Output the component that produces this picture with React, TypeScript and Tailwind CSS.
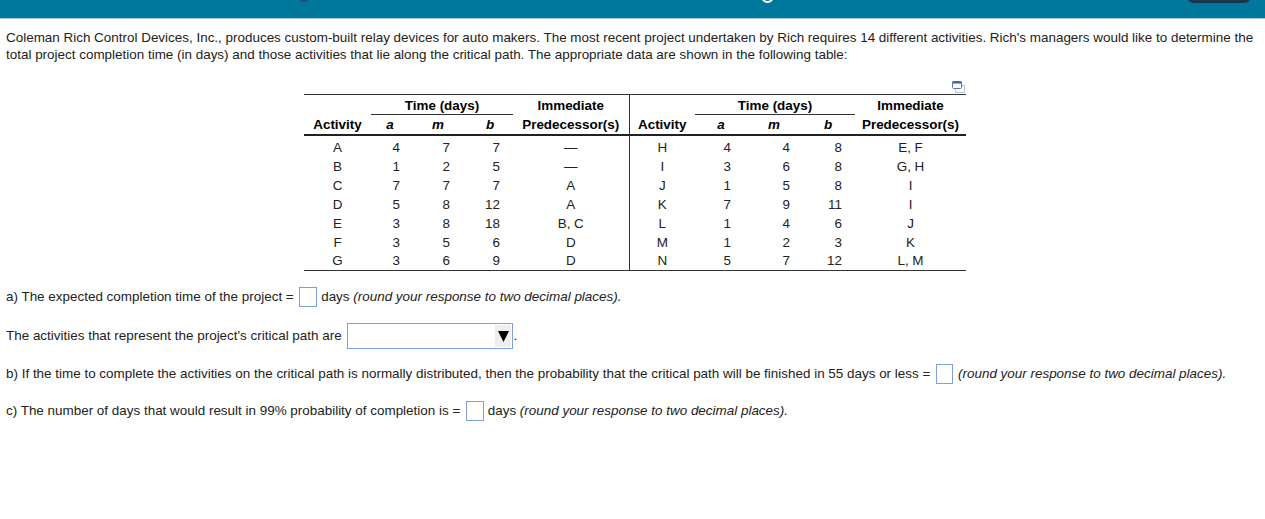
import React from 'react';

const left = [
  ['A', '4', '7', '7', '—'],
  ['B', '1', '2', '5', '—'],
  ['C', '7', '7', '7', 'A'],
  ['D', '5', '8', '12', 'A'],
  ['E', '3', '8', '18', 'B, C'],
  ['F', '3', '5', '6', 'D'],
  ['G', '3', '6', '9', 'D'],
];

const right = [
  ['H', '4', '4', '8', 'E, F'],
  ['I', '3', '6', '8', 'G, H'],
  ['J', '1', '5', '8', 'I'],
  ['K', '7', '9', '11', 'I'],
  ['L', '1', '4', '6', 'J'],
  ['M', '1', '2', '3', 'K'],
  ['N', '5', '7', '12', 'L, M'],
];

function AnswerBox({ className }: { className: string }) {
  return <span className={'inline-block align-middle h-[20px] border border-[#7f9fdc] bg-white ' + className} />;
}

function PopupIcon() {
  return (
    <svg width="13" height="12" viewBox="0 0 13 12" className="block">
      <rect x="3.5" y="4.5" width="9" height="7" fill="#fff" stroke="#b9c2e0" />
      <rect x="0.5" y="0.5" width="9" height="7" rx="1" fill="#fff" stroke="#5a76bd" />
      <rect x="0.5" y="0.5" width="9" height="2" fill="#3f5fae" />
    </svg>
  );
}

export default function App() {
  return (
    <div className="relative h-[519px] w-[1265px] overflow-hidden bg-white font-['Liberation_Sans',Arial,sans-serif] text-[13.44px] leading-[16.5px] text-[#222]">
      <div className="h-[19px] border-b border-[#a9c7d6] bg-[#00789b]" />
      <span className="absolute left-[298px] top-[-10px] h-[12px] w-[12px] rounded-full bg-[#1d4f66]" />
      <span className="absolute left-[761px] top-[-10px] h-[13px] w-[13px] rounded-full border-2 border-white" />
      <span className="absolute left-[1187px] top-[-10px] h-[13px] w-[64px] rounded-full bg-[#17384c]" />

      <p className="mt-[11px] pl-[6px] pr-[8px]">
        Coleman Rich Control Devices, Inc., produces custom-built relay devices for auto makers. The most recent project
        undertaken by Rich requires 14 different activities. Rich's managers would like to determine the total project
        completion time (in days) and those activities that lie along the critical path. The appropriate data are shown
        in the following table:
      </p>

      <div className="ml-[304px] mt-[18px] w-[662px]">
        <div className="flex h-[13px] justify-end pr-[1px]">
          <PopupIcon />
        </div>
        <table className="w-[662px] table-fixed border-collapse border-y border-t-[#333] border-b-[#333] text-center leading-[15px]">
          <colgroup>
            <col className="w-[67px]" />
            <col className="w-[38px]" />
            <col className="w-[58px]" />
            <col className="w-[46px]" />
            <col className="w-[116px]" />
            <col className="w-[66px]" />
            <col className="w-[52px]" />
            <col className="w-[54px]" />
            <col className="w-[54px]" />
            <col className="w-[111px]" />
          </colgroup>
          <thead className="font-bold text-black">
            <tr className="h-[20px]">
              <th className="p-0" />
              <th colSpan={3} className="border-b border-[#333] p-0 pt-[2px] font-bold">Time (days)</th>
              <th className="border-r border-[#333] p-0 pt-[2px] font-bold">Immediate</th>
              <th className="p-0" />
              <th colSpan={3} className="border-b border-[#333] p-0 pt-[2px] font-bold">Time (days)</th>
              <th className="p-0 pt-[2px] font-bold">Immediate</th>
            </tr>
            <tr className="h-[20px] border-b-2 border-[#222]">
              <th className="p-0 font-bold">Activity</th>
              <th className="p-0 font-bold italic">a</th>
              <th className="p-0 font-bold italic">m</th>
              <th className="p-0 font-bold italic">b</th>
              <th className="border-r border-[#333] p-0 font-bold">Predecessor(s)</th>
              <th className="p-0 font-bold">Activity</th>
              <th className="p-0 font-bold italic">a</th>
              <th className="p-0 font-bold italic">m</th>
              <th className="p-0 font-bold italic">b</th>
              <th className="p-0 font-bold">Predecessor(s)</th>
            </tr>
          </thead>
          <tbody>
            <tr className="h-[3px]">
              <td colSpan={5} className="border-r border-[#333] p-0" />
              <td colSpan={5} className="p-0" />
            </tr>
            {left.map((row, i) => (
              <tr key={row[0]} className="h-[19px]">
                <td className="p-0">{row[0]}</td>
                <td className="p-0 pr-[9px] text-right">{row[1]}</td>
                <td className="p-0 pr-[17px] text-right">{row[2]}</td>
                <td className="p-0 pr-[13px] text-right">{row[3]}</td>
                <td className="border-r border-[#333] p-0">{row[4]}</td>
                <td className="p-0">{right[i][0]}</td>
                <td className="p-0 pr-[16px] text-right">{right[i][1]}</td>
                <td className="p-0 pr-[11px] text-right">{right[i][2]}</td>
                <td className="p-0 pr-[13px] text-right">{right[i][3]}</td>
                <td className="p-0">{right[i][4]}</td>
              </tr>
            ))}
          </tbody>
        </table>
      </div>

      <div className="mt-[15px] flex h-[22px] items-center whitespace-pre pl-[6px]">
        a) The expected completion time of the project = <AnswerBox className="ml-[2px] w-[18px]" /> days{' '}
        <i>(round your response to two decimal places).</i>
      </div>

      <div className="mt-[15px] flex h-[26px] items-center whitespace-pre pl-[6px]">
        The activities that represent the project's critical path are{' '}
        <span className="ml-[2px] flex h-[26px] w-[166px] items-center justify-end border border-[#7f9fdc] bg-white pr-[1px]">
          <span className="flex h-[22px] w-[16px] items-center justify-center bg-[#eeeeee]">
            <svg width="11" height="12" viewBox="0 0 11 12">
              <polygon points="0,1 11,1 5.5,12" fill="#000" />
            </svg>
          </span>
        </span>
        .
      </div>

      <div className="mt-[14px] flex h-[22px] items-center whitespace-pre pl-[6px]">
        b) If the time to complete the activities on the critical path is normally distributed, then the probability that
        the critical path will be finished in 55 days or less = <AnswerBox className="ml-[2px] w-[17px]" />{' '}
        <i className="ml-[5px]">(round your response to two decimal places).</i>
      </div>

      <div className="mt-[15px] flex h-[22px] items-center whitespace-pre pl-[6px]">
        c) The number of days that would result in 99% probability of completion is = <AnswerBox className="ml-[2px] w-[18px]" /> days{' '}
        <i>(round your response to two decimal places).</i>
      </div>
    </div>
  );
}
